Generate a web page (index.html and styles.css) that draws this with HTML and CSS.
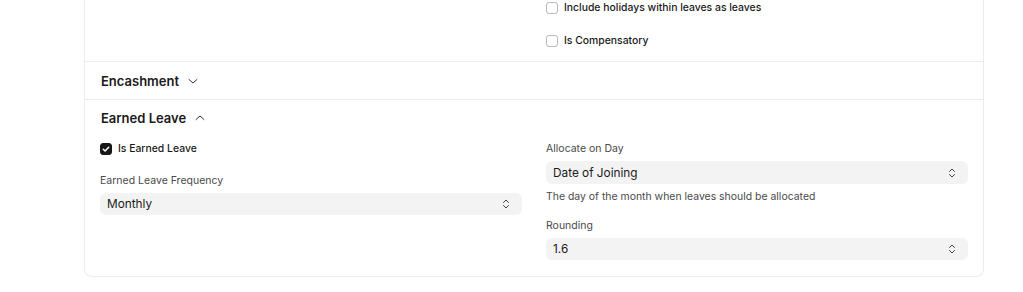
FILE: index.html
```html
<!DOCTYPE html>
<html>
<head>
<meta charset="utf-8">
<link rel="stylesheet" href="styles.css">
</head>
<body>
<div class="card">
  <div class="section sec-top">
    <div class="cols">
      <div class="col"></div>
      <div class="col">
        <div class="check-row"><span class="cb"></span><span class="cb-label">Include holidays within leaves as leaves</span></div>
        <div class="check-row second"><span class="cb"></span><span class="cb-label">Is Compensatory</span></div>
      </div>
    </div>
  </div>
  <div class="section">
    <div class="head"><span class="head-title">Encashment</span>
      <svg class="chev" width="12" height="12" viewBox="0 0 12 12"><path d="M2 4.5 L6 8 L10 4.5" fill="none" stroke="#333" stroke-width="1" stroke-linecap="round" stroke-linejoin="round"/></svg>
    </div>
  </div>
  <div class="section last">
    <div class="head head2"><span class="head-title">Earned Leave</span>
      <svg class="chev" width="12" height="12" viewBox="0 0 12 12"><path d="M2 7.5 L6 4 L10 7.5" fill="none" stroke="#333" stroke-width="1" stroke-linecap="round" stroke-linejoin="round"/></svg>
    </div>
    <div class="cols body">
      <div class="col">
        <div class="check-row earned"><span class="cb checked"><svg width="12" height="12" viewBox="0 0 12 12"><path d="M3.3 6.2 L5.1 8 L8.7 4.2" fill="none" stroke="#fff" stroke-width="1.5" stroke-linecap="round" stroke-linejoin="round"/></svg></span><span class="cb-label">Is Earned Leave</span></div>
        <div class="label mt-left">Earned Leave Frequency</div>
        <div class="select small"><span>Monthly</span><svg class="updown" width="8" height="12" viewBox="0 0 8 12"><path d="M1.5 4.5 L4 2 L6.5 4.5 M1.5 7.5 L4 10 L6.5 7.5" fill="none" stroke="#444" stroke-width="1" stroke-linecap="round" stroke-linejoin="round"/></svg></div>
      </div>
      <div class="col">
        <div class="label">Allocate on Day</div>
        <div class="select"><span>Date of Joining</span><svg class="updown" width="8" height="12" viewBox="0 0 8 12"><path d="M1.5 4.5 L4 2 L6.5 4.5 M1.5 7.5 L4 10 L6.5 7.5" fill="none" stroke="#444" stroke-width="1" stroke-linecap="round" stroke-linejoin="round"/></svg></div>
        <div class="desc">The day of the month when leaves should be allocated</div>
        <div class="label mt-round">Rounding</div>
        <div class="select small"><span>1.6</span><svg class="updown" width="8" height="12" viewBox="0 0 8 12"><path d="M1.5 4.5 L4 2 L6.5 4.5 M1.5 7.5 L4 10 L6.5 7.5" fill="none" stroke="#444" stroke-width="1" stroke-linecap="round" stroke-linejoin="round"/></svg></div>
      </div>
    </div>
  </div>
</div>
</body>
</html>
```
FILE: styles.css
```css
* { box-sizing: border-box; }
html, body { margin: 0; padding: 0; background: #fff; }
body {
  font-family: Inter, "Noto Sans", "Liberation Sans", sans-serif;
  color: #1f1f1f;
  width: 1023px;
  height: 292px;
  overflow: hidden;
}
.card {
  margin-left: 84px;
  width: 900px;
  border: 1px solid #ececec;
  border-top: none;
  border-radius: 0 0 8px 8px;
}
.section { border-bottom: 1px solid #ececec; }
.section.last { border-bottom: none; padding-bottom: 16px; }
.sec-top { height: 62px; padding: 1px 15px 0; }
.cols {
  display: grid;
  grid-template-columns: 1fr 1fr;
  column-gap: 24px;
}
.check-row {
  display: flex;
  align-items: center;
  height: 14px;
  gap: 6px;
  font-size: 10.4px;
  font-weight: 500;
  color: #1a1a1a;
}
.sec-top .check-row.second { margin-top: 19px; }
.check-row.earned { margin-top: 1px; }
.cb {
  width: 12px;
  height: 12px;
  border: 1px solid #b8b8b8;
  border-radius: 3px;
  background: #fff;
  display: inline-flex;
  flex: none;
}
.cb.checked { background: #171717; border-color: #171717; }
.cb.checked svg { margin: -1px; }
.cb-label { line-height: 14px; }
.head {
  height: 37px;
  display: flex;
  align-items: center;
  padding: 0 15px 0 16px;
  gap: 6px;
}
.head2 { height: 41px; padding-bottom: 6px; }
.head-title { font-size: 13px; font-weight: 600; color: #1a1a1a; }
.chev { margin-left: 2px; }
.body { padding: 0 15px; }
.label {
  font-size: 10.5px;
  line-height: 14px;
  color: #4a4a4a;
  padding-top: 1px;
  margin-bottom: 5px;
}
.mt-left { margin-top: 17px; }
.mt-round { margin-top: 14px; }
.select {
  height: 23px;
  background: #f3f3f3;
  border-radius: 6px;
  display: flex;
  align-items: center;
  justify-content: space-between;
  padding: 0 12px 0 7px;
  font-size: 11.8px;
  color: #1a1a1a;
}
.select.small { height: 22px; }
.desc {
  font-size: 10.45px;
  line-height: 14px;
  color: #4a4a4a;
  margin-top: 6px;
}
```
